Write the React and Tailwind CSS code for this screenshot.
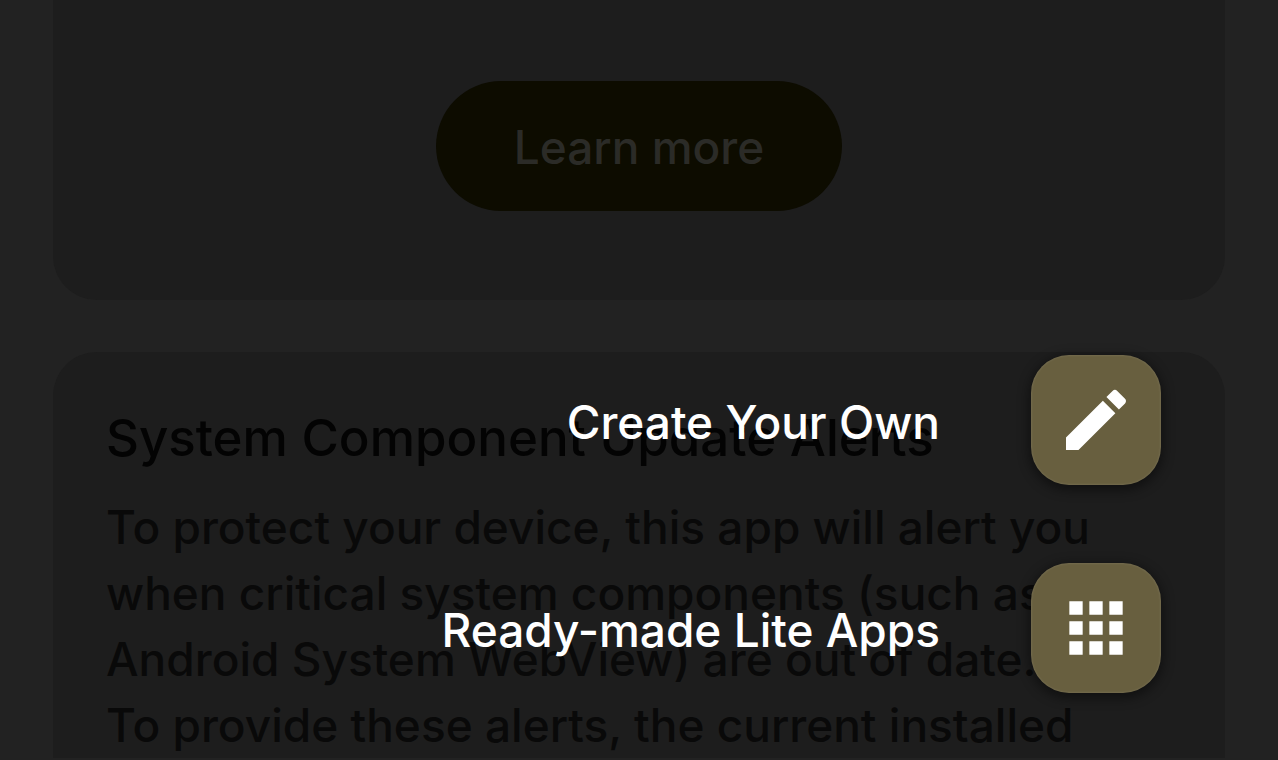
const actions = [
  {
    label: "Create Your Own",
    path: "M3 17.25V21h3.75L17.81 9.94l-3.75-3.75L3 17.25zM20.71 7.04c.39-.39.39-1.02 0-1.41l-2.34-2.34a.9959.9959 0 0 0-1.41 0l-1.83 1.83 3.75 3.75 1.83-1.83z",
  },
  {
    label: "Ready-made Lite Apps",
    path: "M4 8h4V4H4v4zm6 12h4v-4h-4v4zm-6 0h4v-4H4v4zm0-6h4v-4H4v4zm6 0h4v-4h-4v4zm6-10v4h4V4h-4zm-6 4h4V4h-4v4zm6 6h4v-4h-4v4zm0 6h4v-4h-4v4z",
  },
];

function SpeedDial() {
  return (
    <nav
      aria-label="Create"
      className="absolute inset-0 flex flex-col items-end gap-[78px] pt-[355px] pr-[117px]"
    >
      {actions.map(({ label, path }) => (
        <button
          key={label}
          type="button"
          className="flex items-center gap-[91px] text-[46px] leading-[60px] font-medium text-white"
        >
          <span className="pt-1">{label}</span>
          <span className="flex size-[130px] items-center justify-center rounded-[38px] bg-[#685f3f] shadow-[0_3px_12px_2px_rgba(0,0,0,0.45),inset_0_0_2px_1px_rgba(255,255,255,0.08)]">
            <svg viewBox="0 0 24 24" fill="currentColor" className="size-20" aria-hidden="true">
              <path d={path} />
            </svg>
          </span>
        </button>
      ))}
    </nav>
  );
}

export default function App() {
  return (
    <div className="relative h-screen overflow-hidden bg-[#222222] font-['Inter',sans-serif]">
      <main className="flex flex-col gap-[52px] px-[53px]">
        <section className="flex justify-center rounded-b-[44px] bg-[#1d1d1d] pt-[81px] pb-[89px]">
          <button
            type="button"
            className="h-[130px] rounded-full bg-[#0d0c00] px-[78px] pt-0.5 text-[46px] font-medium text-[#2b2b27]"
          >
            Learn more
          </button>
        </section>
        <section className="rounded-t-[44px] bg-[#1d1d1d] px-[53px] pt-[54px]">
          <h2 className="text-[51px] leading-[64px] font-medium text-[#030303]">
            System Component Update Alerts
          </h2>
          <p className="pt-6 text-[46px] leading-[66px] font-medium text-[#090909]">
            To protect your device, this app will alert you
            <br />
            when critical system components (such as
            <br />
            Android System WebView) are out of date.
            <br />
            To provide these alerts, the current installed
          </p>
        </section>
      </main>
      <SpeedDial />
    </div>
  );
}
